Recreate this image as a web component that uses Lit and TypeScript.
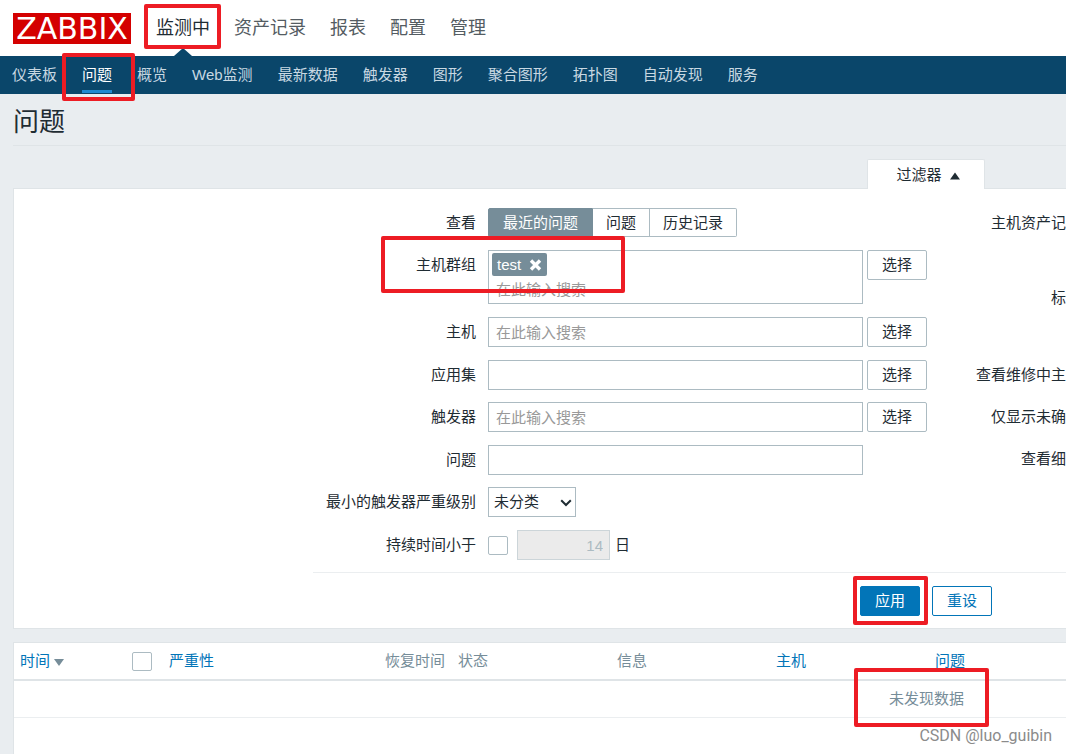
import { LitElement, html, css, nothing } from "lit";
import { customElement, state } from "lit/decorators.js";
import { classMap } from "lit/directives/class-map.js";

const MAIN_MENU = ["监测中", "资产记录", "报表", "配置", "管理"];
const SUB_MENU = [
  "仪表板", "问题", "概览", "Web监测", "最新数据", "触发器",
  "图形", "聚合图形", "拓扑图", "自动发现", "服务",
];
const VIEWS = ["最近的问题", "问题", "历史记录"];
const PLACEHOLDER = "在此输入搜索";

@customElement("app-root")
export class AppRoot extends LitElement {
  @state() private view = 0;

  static styles = css`
    :host {
      display: flex;
      flex-direction: column;
      position: relative;
      min-height: 100vh;
      overflow: hidden;
      background: #e9edf0;
      color: #1f2c33;
      font: 15px/20px "Liberation Sans", "Noto Sans CJK SC", sans-serif;
    }
    *, *::before, *::after { box-sizing: border-box; }
    a { text-decoration: none; color: inherit; }
    input, button, select { font: inherit; color: inherit; margin: 0; }

    .top {
      display: flex;
      align-items: center;
      height: 56px;
      padding-left: 13px;
      background: #fff;
    }
    .logo {
      width: 118px;
      height: 31px;
      background: #d40000;
      color: #fff;
      font: 30px/31px "DejaVu Sans", sans-serif;
      text-align: center;
    }
    .menu {
      display: flex;
      gap: 24px;
      height: 56px;
      margin-left: 25px;
      font-size: 18px;
      line-height: 57px;
      color: #545c62;
    }
    .menu a { position: relative; white-space: nowrap; }
    .menu .on { color: #1f2c33; }
    .menu .on::after {
      content: "";
      position: absolute;
      left: 50%;
      top: 48px;
      margin-left: -9px;
      border: 9px solid transparent;
      border-top: 0;
      border-bottom: 8px solid #0a466a;
    }
    .sub {
      display: flex;
      gap: 25px;
      height: 38px;
      padding-left: 12px;
      background: #0a466a;
      color: #c8d8e2;
      line-height: 37px;
      white-space: nowrap;
    }
    .sub a { height: 37px; }
    .sub .on { color: #fff; border-bottom: 3px solid #1f89d0; }

    .title {
      margin: 0 0 0 13px;
      height: 52px;
      border-bottom: 1px solid #dfe4e7;
      font-size: 26px;
      font-weight: 400;
      line-height: 56px;
    }

    .tabs { display: flex; margin: 13px 0 0 867px; height: 30px; }
    .tab {
      position: relative;
      display: flex;
      align-items: center;
      justify-content: center;
      gap: 8px;
      width: 118px;
      height: 30px;
      margin: 0;
      padding: 0 0 0 4px;
      background: #fff;
      border: 1px solid #dfe4e7;
      border-bottom: 0;
      border-radius: 2px 2px 0 0;
      z-index: 1;
    }
    .tab svg { margin-top: 3px; }

    .panel {
      background: #fff;
      border: 1px solid #dfe4e7;
      border-right: 0;
      margin-left: 13px;
    }
    .filter { margin-top: -1px; padding-bottom: 12px; }
    .columns { display: flex; justify-content: space-between; padding-top: 19px; }
    .row { display: flex; align-items: flex-start; margin-top: 13px; }
    .row:first-child { margin-top: 0; }
    .row:nth-child(2n + 5) { margin-top: 12px; }
    .name {
      width: 462px;
      margin-right: 12px;
      line-height: 29px;
      text-align: right;
      flex: none;
    }
    .views { display: flex; height: 29px; }
    .views input { position: absolute; opacity: 0; width: 1px; height: 1px; }
    .views label {
      padding: 0 13px;
      line-height: 28px;
      border: 1px solid #acbbc2;
      border-left-width: 0;
      white-space: nowrap;
      height: 29px;
    }
    .views label:first-of-type {
      padding: 0 14px;
      border-radius: 2px 0 0 2px;
      border-left-width: 1px;
    }
    .views label:last-of-type { border-radius: 0 2px 2px 0; }
    .views .on { background: #768d99; border-color: #768d99; color: #fff; }

    .box {
      width: 375px;
      height: 30px;
      padding: 0 7px;
      border: 1px solid #acbbc2;
      background: #fff;
      outline: 0;
    }
    ::placeholder { color: #999; opacity: 1; }
    .multi { height: 54px; padding: 2px 3px; }
    .chip {
      display: flex;
      align-items: center;
      gap: 8px;
      width: 55px;
      height: 23px;
      padding-left: 5px;
      border-radius: 2px;
      background: #768d99;
      color: #fff;
    }
    .chip button { display: flex; padding: 0; border: 0; background: none; }
    .bare {
      display: block;
      width: 100%;
      height: 26px;
      padding: 0 4px;
      border: 0;
      outline: 0;
      background: none;
    }
    .btn {
      width: 60px;
      height: 30px;
      padding: 0;
      border: 1px solid #acbbc2;
      border-radius: 2px;
      background: #fff;
    }
    .row .btn { margin-left: 4px; }
    .select { position: relative; }
    .select select {
      width: 88px;
      height: 30px;
      padding: 0 5px;
      border: 1px solid #acbbc2;
      border-radius: 0;
      background: #fff;
      appearance: none;
    }
    .select svg { position: absolute; right: 4px; top: 12px; pointer-events: none; }
    .check {
      appearance: none;
      flex: none;
      width: 20px;
      height: 19px;
      border: 1px solid #acbbc2;
      border-radius: 2px;
      background: #fff;
    }
    .age { display: flex; align-items: center; }
    .days {
      width: 93px;
      height: 30px;
      margin: 0 5px 0 9px;
      padding: 0 6px;
      border: 1px solid #ccd5d9;
      background: #ebebeb;
      color: #acbbc2;
      text-align: right;
    }

    .side {
      display: flex;
      flex-direction: column;
      align-items: flex-end;
      overflow: hidden;
      line-height: 29px;
      white-space: nowrap;
    }
    .side span { height: 30px; margin-top: 12px; }
    .side span:first-child { margin-top: 0; }
    .side .gap { margin: 45px 0; }
    .side .gap + span { margin-top: 2px; }

    .actions {
      display: flex;
      gap: 12px;
      margin: 12px 0 0 299px;
      padding: 13px 0 0 547px;
      border-top: 1px solid #ebeef0;
    }
    .primary { background: #0275b8; border-color: #0275b8; color: #fff; }
    .ghost { border-color: #0275b8; color: #0275b8; }

    .list { flex: 1; margin-top: 13px; border-bottom: 0; }
    table { width: 100%; border-collapse: collapse; table-layout: fixed; }
    th, td { padding: 0 6px; text-align: left; font-weight: 400; color: #768d99; white-space: nowrap; }
    th { height: 37px; border-bottom: 2px solid #dfe4e7; }
    td { height: 37px; border-bottom: 1px solid #ebeef0; }
    th a { color: #0275b8; }
    th svg { margin-left: 4px; }
    th .check { display: block; }
    .c-time { width: 112px; }
    .c-check { width: 37px; }
    .c-sev { width: 216px; }
    .c-rec { width: 73px; }
    .c-mid { width: 159px; }
    .empty { padding-left: 875px; }

    .mark {
      position: absolute;
      border: 4px solid #ed1c24;
      border-radius: 2px;
      pointer-events: none;
      z-index: 2;
    }
    .m-menu { left: 144px; top: 4px; width: 77px; height: 45px; }
    .m-sub { left: 62px; top: 53px; width: 73px; height: 48px; }
    .m-group { left: 381px; top: 236px; width: 244px; height: 57px; }
    .m-apply { left: 853px; top: 576px; width: 75px; height: 49px; }
    .m-empty { left: 854px; top: 668px; width: 135px; height: 59px; }
    .watermark {
      position: absolute;
      right: 14px;
      bottom: 8px;
      font-family: Roboto, sans-serif;
      font-size: 16px;
      color: #8b8b8b;
    }
  `;

  private field(id: string, label: string, hint: string, choose: boolean) {
    return html`<div class="row">
      <label class="name" for=${id}>${label}</label>
      <input class="box" id=${id} type="text" placeholder=${hint} />
      ${choose ? html`<button class="btn" type="button">选择</button>` : nothing}
    </div>`;
  }

  render() {
    return html`
      <header class="top">
        <a class="logo" href="#">ZABBIX</a>
        <nav class="menu">
          ${MAIN_MENU.map((t, i) => html`<a href="#" class=${classMap({ on: i === 0 })}>${t}</a>`)}
        </nav>
      </header>
      <nav class="sub">
        ${SUB_MENU.map((t, i) => html`<a href="#" class=${classMap({ on: i === 1 })}>${t}</a>`)}
      </nav>
      <h1 class="title">问题</h1>

      <div class="tabs">
        <button class="tab" type="button">
          过滤器
          <svg width="10" height="8" viewBox="0 0 10 8"><path d="M5 0.5 10 7.5H0z" fill="#1f2c33" /></svg>
        </button>
      </div>
      <form class="panel filter">
        <div class="columns">
          <div>
            <div class="row">
              <span class="name">查看</span>
              <div class="views" role="radiogroup" aria-label="查看">
                ${VIEWS.map((t, i) => html`
                  <input type="radio" name="view" id="view${i}" .checked=${this.view === i}
                    @change=${() => (this.view = i)} />
                  <label for="view${i}" class=${classMap({ on: this.view === i })}>${t}</label>`)}
              </div>
            </div>
            <div class="row">
              <label class="name" for="groups">主机群组</label>
              <div class="box multi">
                <span class="chip">test
                  <button type="button" aria-label="test">
                    <svg width="13" height="12" viewBox="0 0 13 12">
                      <path d="M2 1.5 11 10.5M11 1.5 2 10.5" stroke="#fff" stroke-width="3.4" />
                    </svg>
                  </button>
                </span>
                <input class="bare" id="groups" type="text" placeholder=${PLACEHOLDER} />
              </div>
              <button class="btn" type="button">选择</button>
            </div>
            ${this.field("hosts", "主机", PLACEHOLDER, true)}
            ${this.field("application", "应用集", "", true)}
            ${this.field("triggers", "触发器", PLACEHOLDER, true)}
            ${this.field("problem", "问题", "", false)}
            <div class="row">
              <label class="name" for="severity">最小的触发器严重级别</label>
              <div class="select">
                <select id="severity"><option>未分类</option></select>
                <svg width="12" height="8" viewBox="0 0 12 8">
                  <path d="M1.2 1.2 6 6 10.8 1.2" fill="none" stroke="#1f2c33" stroke-width="2" />
                </svg>
              </div>
            </div>
            <div class="row">
              <label class="name" for="age">持续时间小于</label>
              <div class="age">
                <input class="check" id="age" type="checkbox" />
                <input class="days" type="text" value="14" aria-label="日" disabled />
                <span>日</span>
              </div>
            </div>
          </div>
          <div class="side">
            <span>主机资产记</span>
            <span class="gap">标</span>
            <span>查看维修中主</span>
            <span>仅显示未确</span>
            <span>查看细</span>
          </div>
        </div>
        <div class="actions">
          <button class="btn primary" type="button">应用</button>
          <button class="btn ghost" type="button">重设</button>
        </div>
      </form>

      <section class="panel list">
        <table>
          <thead>
            <tr>
              <th class="c-time"><a href="#">时间<svg width="10" height="7" viewBox="0 0 10 7"><path d="M0 0H10L5 7z" fill="#768d99" /></svg></a></th>
              <th class="c-check"><input class="check" type="checkbox" aria-label="全选" /></th>
              <th class="c-sev"><a href="#">严重性</a></th>
              <th class="c-rec">恢复时间</th>
              <th class="c-mid">状态</th>
              <th class="c-mid">信息</th>
              <th class="c-mid"><a href="#">主机</a></th>
              <th><a href="#">问题</a></th>
            </tr>
          </thead>
          <tbody>
            <tr><td class="empty" colspan="8">未发现数据</td></tr>
          </tbody>
        </table>
      </section>

      <div class="mark m-menu"></div>
      <div class="mark m-sub"></div>
      <div class="mark m-group"></div>
      <div class="mark m-apply"></div>
      <div class="mark m-empty"></div>
      <div class="watermark">CSDN @luo_guibin</div>
    `;
  }
}
